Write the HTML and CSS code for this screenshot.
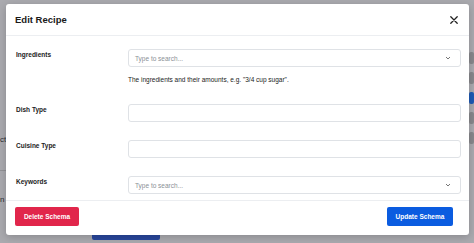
FILE: index.html
```html
<!DOCTYPE html>
<html lang="en">
<head>
    <meta charset="UTF-8">
    <meta name="viewport" content="width=device-width, initial-scale=1.0">
    <title>Edit Recipe</title>
    <link rel="stylesheet" href="styles.css">
</head>
<body>
    <!-- Page behind the overlay -->
    <div class="page">
        <div class="page-left">
            <span class="frag frag-1">cti</span>
            <span class="page-rule"></span>
            <span class="frag frag-2">n</span>
        </div>
        <div class="page-right">
            <span class="chip chip-grey"></span>
            <span class="chip chip-grey"></span>
            <span class="chip chip-blue"></span>
            <span class="chip chip-grey"></span>
            <span class="chip chip-grey"></span>
        </div>
        <div class="page-button"></div>
    </div>

    <div class="backdrop"></div>

    <!-- Modal -->
    <div class="modal">
        <div class="modal-header">
            <h1>Edit Recipe</h1>
            <button class="close-btn" aria-label="Close">
                <svg width="8" height="8" viewBox="0 0 10 10">
                    <path d="M1 1 L9 9 M9 1 L1 9" stroke="#222" stroke-width="1.6" stroke-linecap="round"/>
                </svg>
            </button>
        </div>

        <div class="modal-body">
            <div class="form-row">
                <label>Ingredients</label>
                <div class="field">
                    <div class="input select">
                        <span class="placeholder">Type to search...</span>
                        <svg class="chevron" width="6" height="4" viewBox="0 0 6 4">
                            <path d="M1 1 L3 3 L5 1" fill="none" stroke="#666" stroke-width="0.9"/>
                        </svg>
                    </div>
                    <p class="help">The ingredients and their amounts, e.g. "3/4 cup sugar".</p>
                </div>
            </div>

            <div class="form-row">
                <label>Dish Type</label>
                <div class="field">
                    <div class="input"></div>
                </div>
            </div>

            <div class="form-row">
                <label>Cuisine Type</label>
                <div class="field">
                    <div class="input"></div>
                </div>
            </div>

            <div class="form-row">
                <label>Keywords</label>
                <div class="field">
                    <div class="input select">
                        <span class="placeholder">Type to search...</span>
                        <svg class="chevron" width="6" height="4" viewBox="0 0 6 4">
                            <path d="M1 1 L3 3 L5 1" fill="none" stroke="#666" stroke-width="0.9"/>
                        </svg>
                    </div>
                </div>
            </div>
        </div>

        <div class="modal-footer">
            <button class="btn btn-danger">Delete Schema</button>
            <button class="btn btn-primary">Update Schema</button>
        </div>
    </div>
</body>
</html>
```

FILE: styles.css
```css
/* General */
body {
    margin: 0;
    width: 474px;
    height: 243px;
    overflow: hidden;
    font-family: "Liberation Sans", Arial, sans-serif;
    background-color: #f4f4f6;
    position: relative;
}

/* Page behind the modal */
.page {
    width: 100%;
    height: 100%;
}

.page-left {
    position: absolute;
    left: 0;
    top: 0;
    width: 10px;
    height: 100%;
}

.frag {
    position: absolute;
    left: 0;
    font-size: 8px;
    color: #222;
}

.frag-1 {
    top: 135px;
}

.frag-2 {
    top: 195px;
}

.page-rule {
    position: absolute;
    left: 0;
    top: 170px;
    width: 10px;
    height: 1px;
    background-color: #ccc;
}

.page-right {
    position: absolute;
    right: 0;
    top: 52px;
    width: 5px;
    display: flex;
    flex-direction: column;
    gap: 8px;
}

.chip {
    display: block;
    width: 5px;
    height: 12px;
    border-radius: 2px;
}

.chip-grey {
    background-color: #bbb;
}

.chip-blue {
    background-color: #0d6efd;
}

.page-button {
    position: absolute;
    left: 92px;
    top: 230px;
    width: 68px;
    height: 10px;
    background-color: #1d4fd8;
    border-radius: 2px;
}

.backdrop {
    position: absolute;
    inset: 0;
    background-color: rgba(60, 60, 70, 0.4);
}

/* Modal */
.modal {
    position: absolute;
    left: 6px;
    top: 4px;
    width: 463px;
    height: 231px;
    background-color: #fff;
    border-radius: 3px;
    box-shadow: 0 2px 8px rgba(0, 0, 0, 0.2);
    display: flex;
    flex-direction: column;
}

.modal-header {
    height: 32px;
    box-sizing: border-box;
    border-bottom: 1px solid #eceef1;
    display: flex;
    align-items: center;
    justify-content: space-between;
    padding: 0 10px 0 9px;
}

.modal-header h1 {
    margin: 0;
    font-size: 9.5px;
    font-weight: 700;
    color: #1a1a1a;
}

.close-btn {
    background: none;
    border: none;
    padding: 0;
    width: 10px;
    height: 10px;
    display: flex;
    align-items: center;
    justify-content: center;
    cursor: pointer;
}

.modal-body {
    flex: 1;
    overflow: hidden;
    padding: 13px 8px 0 10px;
    box-sizing: border-box;
    border-bottom: 1px solid #eceef1;
}

/* Form rows */
.form-row {
    display: flex;
    margin-bottom: 18px;
}

.form-row label {
    width: 112px;
    flex-shrink: 0;
    font-size: 6.5px;
    line-height: 8px;
    font-weight: 700;
    color: #222;
    padding-top: 2px;
}

.field {
    flex: 1;
}

.input {
    height: 18px;
    box-sizing: border-box;
    border: 1px solid #dfe2e6;
    border-radius: 3px;
    background-color: #fff;
}

.select {
    display: flex;
    align-items: center;
    justify-content: space-between;
    padding: 0 9px 0 6px;
}

.placeholder {
    font-size: 6.5px;
    color: #8a8f96;
}

.help {
    margin: 9px 0 2px 0;
    font-size: 6.5px;
    line-height: 8px;
    color: #222;
}

/* Footer */
.modal-footer {
    display: flex;
    justify-content: space-between;
    padding: 6px 16px 9px 9px;
}

.btn {
    height: 19px;
    border: none;
    border-radius: 2px;
    color: #fff;
    font-family: inherit;
    font-size: 6.5px;
    font-weight: 700;
    white-space: nowrap;
    padding: 0;
    cursor: pointer;
}

.btn-danger {
    width: 64px;
    background-color: #e1264b;
}

.btn-primary {
    width: 66px;
    background-color: #0b5ce0;
}
```
